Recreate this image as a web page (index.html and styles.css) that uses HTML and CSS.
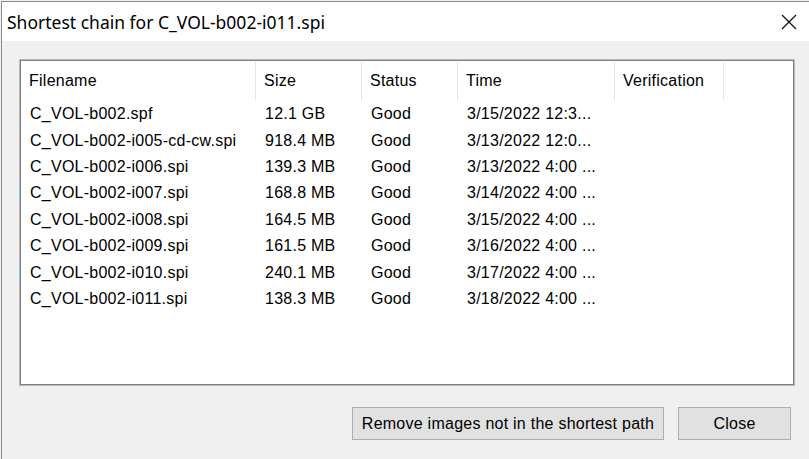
FILE: index.html
```html
<!DOCTYPE html>
<html>
<head>
<meta charset="utf-8">
<link rel="stylesheet" href="styles.css">
</head>
<body>
<div class="window">
  <div class="titlebar">
    <span class="title">Shortest chain for C_VOL-b002-i011.spi</span>
    <span class="close-x">
      <svg width="16" height="16" viewBox="0 0 16 16"><path d="M1 1 L15 15 M15 1 L1 15" stroke="#111" stroke-width="1.3" fill="none"/></svg>
    </span>
  </div>
  <div class="client">
    <div class="list">
      <div class="grid head">
        <div class="hc">Filename</div>
        <div class="hc">Size</div>
        <div class="hc">Status</div>
        <div class="hc">Time</div>
        <div class="hc">Verification</div>
        <div class="hc last"></div>
      </div>
      <div class="grid row"><div>C_VOL-b002.spf</div><div>12.1 GB</div><div>Good</div><div>3/15/2022 12:3...</div><div></div></div>
      <div class="grid row"><div>C_VOL-b002-i005-cd-cw.spi</div><div>918.4 MB</div><div>Good</div><div>3/13/2022 12:0...</div><div></div></div>
      <div class="grid row"><div>C_VOL-b002-i006.spi</div><div>139.3 MB</div><div>Good</div><div>3/13/2022 4:00 ...</div><div></div></div>
      <div class="grid row"><div>C_VOL-b002-i007.spi</div><div>168.8 MB</div><div>Good</div><div>3/14/2022 4:00 ...</div><div></div></div>
      <div class="grid row"><div>C_VOL-b002-i008.spi</div><div>164.5 MB</div><div>Good</div><div>3/15/2022 4:00 ...</div><div></div></div>
      <div class="grid row"><div>C_VOL-b002-i009.spi</div><div>161.5 MB</div><div>Good</div><div>3/16/2022 4:00 ...</div><div></div></div>
      <div class="grid row"><div>C_VOL-b002-i010.spi</div><div>240.1 MB</div><div>Good</div><div>3/17/2022 4:00 ...</div><div></div></div>
      <div class="grid row"><div>C_VOL-b002-i011.spi</div><div>138.3 MB</div><div>Good</div><div>3/18/2022 4:00 ...</div><div></div></div>
    </div>
    <div class="buttons">
      <button class="btn wide">Remove images not in the shortest path</button>
      <button class="btn narrow">Close</button>
    </div>
  </div>
</div>
</body>
</html>
```

FILE: styles.css
```css
html, body {
  margin: 0;
  padding: 0;
  background: #f0f0f0;
  width: 809px;
  height: 459px;
  overflow: hidden;
}
body {
  padding: 1px 0 0 1px;
  box-sizing: border-box;
}
.window {
  border-top: 1px solid #8a8a8a;
  border-left: 1px solid #8a8a8a;
  height: 458px;
  box-sizing: border-box;
  background: #f0f0f0;
  color: #000;
}
.titlebar {
  height: 39px;
  background: #fff;
  display: flex;
  align-items: center;
  justify-content: space-between;
}
.title {
  font-family: "Noto Sans", "Open Sans", sans-serif;
  font-size: 17.5px;
  padding-left: 5px;
  color: #000;
}
.close-x {
  display: flex;
  width: 16px;
  height: 16px;
  margin-right: 12px;
}
.client {
  padding: 19px 0 0 18px;
  font-family: "Liberation Sans", Arial, sans-serif;
  font-size: 16px;
  letter-spacing: 0.25px;
}
.list {
  width: 774px;
  height: 325px;
  box-sizing: border-box;
  background: #fff;
  border: 1px solid #7f7f7f;
  box-shadow: 0 0 0 1px #b9b9b9;
  overflow: hidden;
}
.grid {
  display: grid;
  grid-template-columns: 235px 106px 96px 157px 109px 1fr;
}
.head {
  height: 40px;
}
.hc {
  display: flex;
  align-items: center;
  padding-left: 8px;
  border-right: 1px solid #e5e5e5;
  margin-top: 1px;
  height: 38px;
}
.hc.last {
  border-right: none;
}
.row {
  height: 26.4px;
  align-items: center;
}
.row > div {
  padding-left: 9px;
  white-space: nowrap;
  line-height: 26px;
}
.buttons {
  display: flex;
  gap: 14px;
  margin-top: 22px;
  padding-left: 332px;
}
.btn {
  font-family: "Liberation Sans", Arial, sans-serif;
  font-size: 16px;
  letter-spacing: 0.25px;
  color: #000;
  background: #e1e1e1;
  border: 1px solid #adadad;
  height: 33px;
  padding: 0;
  margin: 0;
}
.btn.wide {
  width: 312px;
}
.btn.narrow {
  width: 113px;
}
```
